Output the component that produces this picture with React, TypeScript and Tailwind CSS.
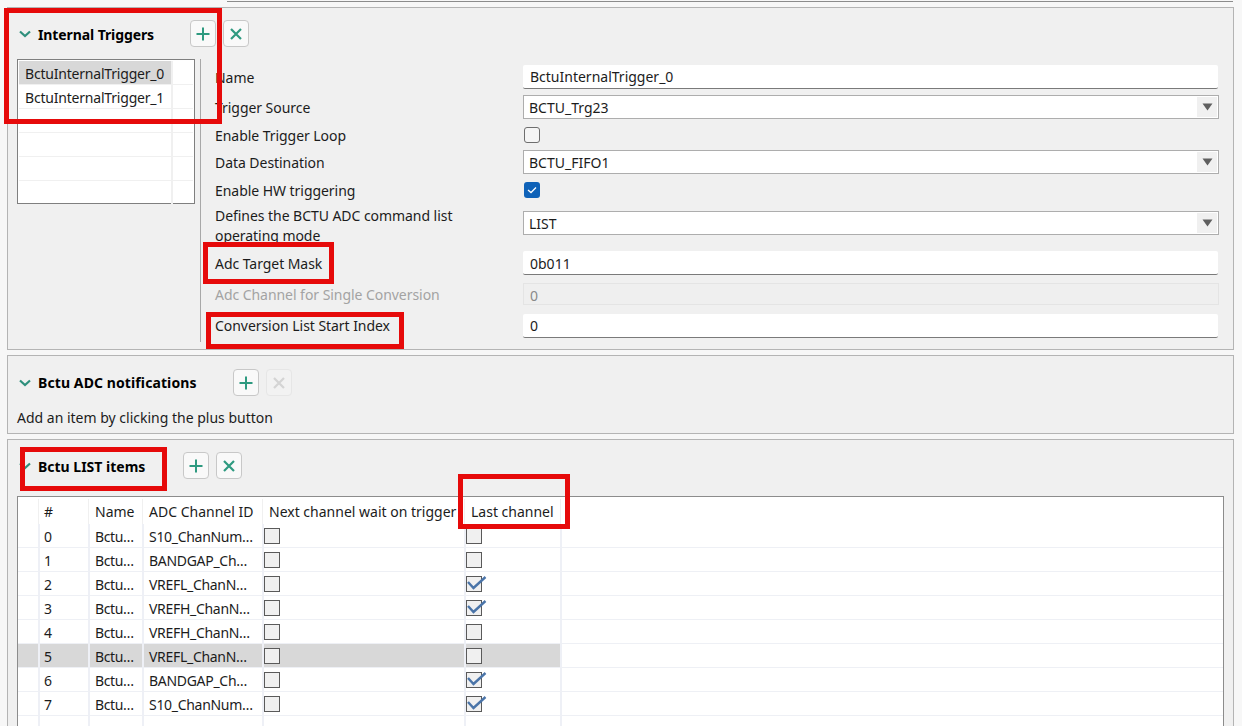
import type { ReactNode } from "react";

const triggers = ["BctuInternalTrigger_0", "BctuInternalTrigger_1", "", "", "", ""];

const listItems = [
  { id: "0", channel: "S10_ChanNum…", last: false },
  { id: "1", channel: "BANDGAP_Ch…", last: false },
  { id: "2", channel: "VREFL_ChanN…", last: true },
  { id: "3", channel: "VREFH_ChanN…", last: true },
  { id: "4", channel: "VREFH_ChanN…", last: false },
  { id: "5", channel: "VREFL_ChanN…", last: false, selected: true },
  { id: "6", channel: "BANDGAP_Ch…", last: true },
  { id: "7", channel: "S10_ChanNum…", last: true },
  { id: "", channel: "", last: false, empty: true },
];

function Chevron() {
  return (
    <svg width="12" height="8" viewBox="0 0 12 8" className="shrink-0">
      <path d="M1 1.5 L6 6 L11 1.5" fill="none" stroke="#2e8f7c" strokeWidth="2.2" />
    </svg>
  );
}

function ToolButton({ kind, disabled }: { kind: "add" | "remove"; disabled?: boolean }) {
  const color = disabled ? "#d4d4d4" : "#2e9a80";
  return (
    <div
      className={`flex h-[27px] w-[26px] items-center justify-center rounded-[4px] border ${
        disabled ? "border-[#e6e6e6] bg-[#f2f2f2]" : "border-[#c8c8c8] bg-[#f9f9f9]"
      }`}
    >
      <svg width="16" height="16" viewBox="0 0 16 16">
        {kind === "add" ? (
          <path d="M8 1.5 V14.5 M1.5 8 H14.5" stroke={color} strokeWidth="2" fill="none" />
        ) : (
          <path d="M3 3 L13 13 M13 3 L3 13" stroke={color} strokeWidth="2.2" fill="none" />
        )}
      </svg>
    </div>
  );
}

function SectionHeader({
  title,
  titleClass,
  removeDisabled,
}: {
  title: string;
  titleClass: string;
  removeDisabled?: boolean;
}) {
  return (
    <div className="flex h-[27px] items-center pl-[11px]">
      <Chevron />
      <span className={`ml-[7px] text-[14px] font-bold text-black ${titleClass}`}>{title}</span>
      <ToolButton kind="add" />
      <div className="ml-[7px]">
        <ToolButton kind="remove" disabled={removeDisabled} />
      </div>
    </div>
  );
}

function FormRow({
  label,
  height,
  children,
  muted,
  labelClass = "pt-[2px]",
}: {
  label: ReactNode;
  height: string;
  children: ReactNode;
  muted?: boolean;
  labelClass?: string;
}) {
  return (
    <div className={`flex items-center ${height}`}>
      <div className={`w-[308px] pr-[40px] text-[14px] leading-[20px] tracking-[-0.05px] ${labelClass} ${muted ? "text-[#a3a3a3]" : "text-[#1c1c1c]"}`}>
        {label}
      </div>
      <div className="w-[696px]">{children}</div>
    </div>
  );
}

function TextInput({ value, textClass = "" }: { value: string; textClass?: string }) {
  return (
    <div className={`mr-px flex h-[24px] items-center rounded-[2px] border-b border-b-[#7a7a7a] bg-white pl-[7px] text-[14px] text-[#1c1c1c] ${textClass}`}>
      {value}
    </div>
  );
}

function SelectBox({ value }: { value: string }) {
  return (
    <div className="flex h-[24px] items-center border border-[#adadad] bg-white pl-[5px] text-[14px] text-[#1c1c1c]">
      <span className="flex-1">{value}</span>
      <span className="mr-px flex h-[20px] w-[20px] items-center justify-center bg-[#f0f0f0]">
        <svg width="11" height="8" viewBox="0 0 11 8">
          <path d="M0.5 0.5 H10.5 L5.5 7.5 Z" fill="#5f5f5f" />
        </svg>
      </span>
    </div>
  );
}

function FormCheck({ checked }: { checked?: boolean }) {
  if (checked) {
    return (
      <div className="ml-px flex h-[16px] w-[16px] items-center justify-center rounded-[3px] bg-[#0f62b8]">
        <svg width="10" height="8" viewBox="0 0 10 8">
          <path d="M1 4 L4 6.5 L9 1.5" fill="none" stroke="white" strokeWidth="1.3" />
        </svg>
      </div>
    );
  }
  return <div className="ml-px h-[16px] w-[16px] rounded-[3px] border border-[#6e6e6e] bg-[#f5f5f5]" />;
}

function CellCheck({ checked }: { checked?: boolean }) {
  return (
    <div className="relative h-[16px] w-[16px] border border-[#5a5a5a] bg-[#f0f0f0]">
      {checked && (
        <svg width="21" height="15" viewBox="0 0 21 15" className="absolute -left-px -top-px">
          <path d="M2 6 L7.5 12 L19.5 1" fill="none" stroke="#4a74a8" strokeWidth="2.4" />
        </svg>
      )}
    </div>
  );
}

function RedBox({ className }: { className: string }) {
  return <div className={`absolute border-[5px] border-[#e60a0a] ${className}`} />;
}

export default function App() {
  return (
    <div className="relative h-[726px] w-[1242px] overflow-hidden bg-[#f7f7f7] font-['Noto_Sans','Open_Sans',sans-serif]">
      <div className="ml-[227px] mr-[9px] mt-px h-[1px] bg-[#8c8c8c]" />

      <div className="ml-[7px] mt-[5px] w-[1227px]">
        {/* Internal Triggers */}
        <section className="h-[343px] border border-[#b4b4b4] bg-[#f0f0f0] pt-[12px]">
          <SectionHeader title="Internal Triggers" titleClass="w-[152px] pt-[2px] tracking-[-0.1px]" />
          <div className="mt-[12px] flex">
            <div className="ml-[9px] h-[145px] w-[178px] border border-[#7f7f7f] bg-white p-px">
              {triggers.map((name, i) => (
                <div key={i} className="flex h-[24px] border-b border-[#f0f0f0]">
                  <div
                    className={`w-[154px] border-r-2 border-[#f0f0f0] pl-[6px] pt-[1px] text-[14px] leading-[23px] tracking-[-0.2px] text-[#1c1c1c] ${
                      i === 0 ? "bg-[#d8d8d8]" : ""
                    }`}
                  >
                    {name}
                  </div>
                </div>
              ))}
            </div>

            <div className="ml-[5px] h-[283px] w-px bg-[#a8a8a8]" />

            <div className="ml-[14px] pt-[6px]">
              <FormRow label="Name" height="h-[24px]">
                <TextInput value="BctuInternalTrigger_0" />
              </FormRow>
              <FormRow label="Trigger Source" height="h-[24px] mt-[6px]">
                <SelectBox value="BCTU_Trg23" />
              </FormRow>
              <FormRow label="Enable Trigger Loop" height="h-[31px]">
                <FormCheck />
              </FormRow>
              <FormRow label="Data Destination" height="h-[24px]">
                <SelectBox value="BCTU_FIFO1" />
              </FormRow>
              <FormRow label="Enable HW triggering" height="h-[32px]">
                <FormCheck checked />
              </FormRow>
              <FormRow label="Defines the BCTU ADC command list operating mode" height="h-[40px] -mt-[1px]">
                <div className="mb-[4px]">
                  <SelectBox value="LIST" />
                </div>
              </FormRow>
              <FormRow label="Adc Target Mask" height="h-[24px] mt-[6px]">
                <TextInput value="0b011" textClass="pt-[2px]" />
              </FormRow>
              <FormRow label="Adc Channel for Single Conversion" height="h-[22px] mt-[8px]" muted>
                <div className="flex h-[22px] items-center border border-[#e4e4e4] bg-[#efefef] pl-[6px] pt-[2px] text-[14px] text-[#8a8a8a]">0</div>
              </FormRow>
              <FormRow label="Conversion List Start Index" height="h-[24px] mt-[9px]" labelClass="tracking-[-0.1px]">
                <TextInput value="0" />
              </FormRow>
            </div>
          </div>
        </section>

        {/* Bctu ADC notifications */}
        <section className="mt-[5px] h-[79px] border border-[#b4b4b4] bg-[#f0f0f0] pt-[13px]">
          <SectionHeader title="Bctu ADC notifications" titleClass="w-[195px] tracking-[0.1px]" removeDisabled />
          <p className="ml-[9px] mt-[12px] text-[14px] leading-[20px] text-[#1c1c1c]">Add an item by clicking the plus button</p>
        </section>

        {/* Bctu LIST items */}
        <section className="mt-[5px] h-[300px] border border-[#b4b4b4] bg-[#f0f0f0] pt-[12px]">
          <SectionHeader title="Bctu LIST items" titleClass="w-[145px] pt-[2px]" />
          <div className="ml-[9px] mt-[17px] w-[1207px] border border-[#8c8c8c] bg-white text-[14px] text-[#1c1c1c]">
            <div className="flex h-[27px] items-center pt-[2px]">
              <div className="h-full w-[20px]" />
              <div className="flex h-full w-[50px] items-center border-l border-[#f0f0f0] pl-[5px]">#</div>
              <div className="flex h-full w-[54px] items-center border-l border-[#f0f0f0] pl-[6px]">Name</div>
              <div className="flex h-full w-[120px] items-center border-l border-[#f0f0f0] pl-[6px]">ADC Channel ID</div>
              <div className="flex h-full w-[202px] items-center whitespace-nowrap border-l border-[#f0f0f0] pl-[6px]">Next channel wait on trigger</div>
              <div className="flex h-full w-[96px] items-center border-l border-[#f0f0f0] pl-[6px]">Last channel</div>
              <div className="h-full flex-1 border-l border-[#f0f0f0]" />
            </div>
            {listItems.map((item, i) => (
              <div key={i} className="flex h-[24px] border-b border-[#eef0f5]">
                <div className={`flex w-[542px] ${item.selected ? "bg-[#d8d8d8]" : ""}`}>
                  <div className="w-[20px]" />
                  <div className="flex w-[50px] items-center border-l-2 border-[#eef0f6] pl-[4px] pt-[2px]">{item.id}</div>
                  <div className="flex w-[54px] items-center border-l-2 border-[#eef0f6] pl-[5px] pt-[2px] tracking-[-0.4px]">{item.empty ? "" : "Bctu…"}</div>
                  <div className="flex w-[120px] items-center whitespace-nowrap border-l-2 border-[#eef0f6] pl-[5px] pt-[2px] tracking-[-0.3px]">{item.channel}</div>
                  <div className="flex w-[202px] items-center border-l-2 border-[#eef0f6]">{!item.empty && <CellCheck />}</div>
                  <div className="flex w-[96px] items-center border-l-2 border-[#eef0f6]">{!item.empty && <CellCheck checked={item.last} />}</div>
                </div>
                <div className="flex-1 border-l-2 border-[#eef0f6]" />
              </div>
            ))}
          </div>
        </section>
      </div>

      {/* Annotation boxes drawn over the screenshot */}
      <RedBox className="left-[4px] top-[8px] h-[116px] w-[218px]" />
      <RedBox className="left-[203px] top-[242px] h-[42px] w-[131px]" />
      <RedBox className="left-[206px] top-[312px] h-[37px] w-[198px]" />
      <RedBox className="left-[20px] top-[447px] h-[44px] w-[147px]" />
      <RedBox className="left-[458px] top-[474px] h-[55px] w-[112px]" />
    </div>
  );
}
